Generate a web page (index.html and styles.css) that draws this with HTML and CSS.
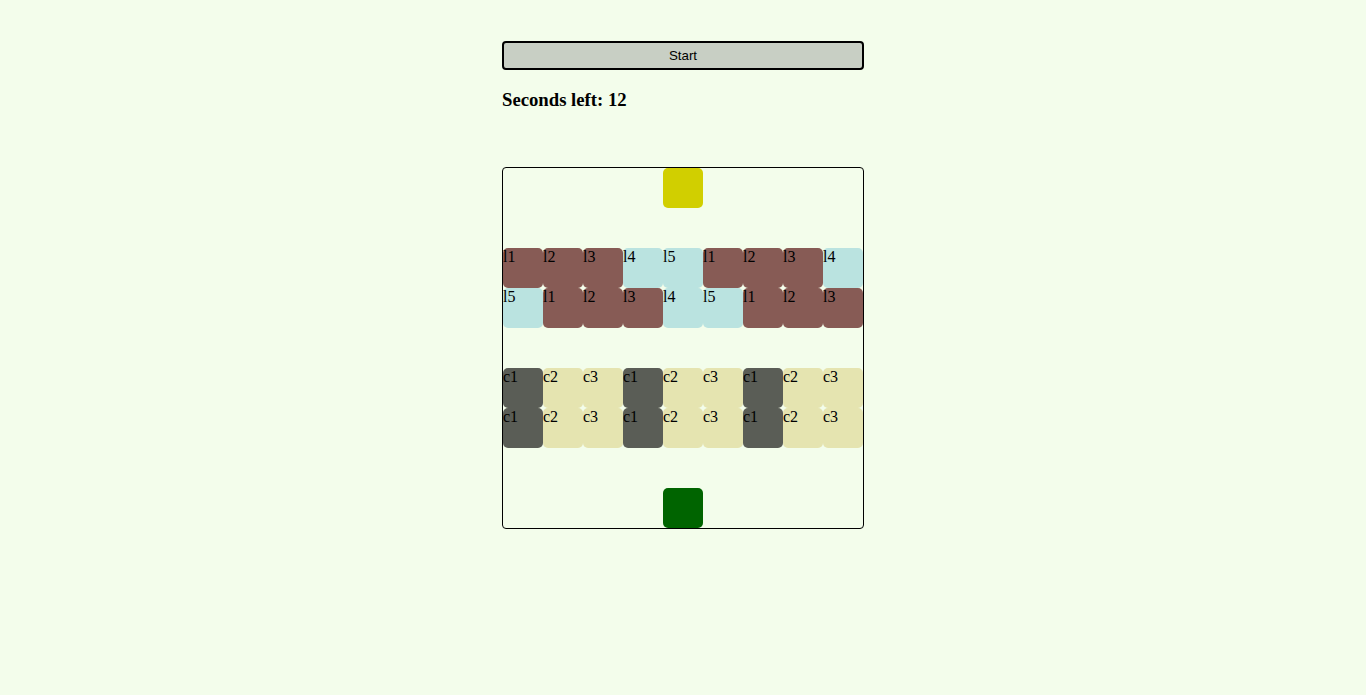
FILE: index.html
```html
<!DOCTYPE html><html lang="en"><head><meta charset="UTF-8"><meta name="viewport" content="width=device-width, initial-scale=1.0"><title>Frogger</title><link rel="stylesheet" href="styles.css"></head><body>
<div class="game">
  <button class="start">Start</button>
  <h3 class="timer">Seconds left: <span id="time">12</span></h3>
  <div class="grid">
    <div></div><div></div><div></div><div></div><div class="ending"></div><div></div><div></div><div></div><div></div>
    <div></div><div></div><div></div><div></div><div></div><div></div><div></div><div></div><div></div>
    <div class="log-left l1">l1</div><div class="log-left l2">l2</div><div class="log-left l3">l3</div><div class="log-left l4">l4</div><div class="log-left l5">l5</div><div class="log-left l1">l1</div><div class="log-left l2">l2</div><div class="log-left l3">l3</div><div class="log-left l4">l4</div>
    <div class="log-right l5">l5</div><div class="log-right l1">l1</div><div class="log-right l2">l2</div><div class="log-right l3">l3</div><div class="log-right l4">l4</div><div class="log-right l5">l5</div><div class="log-right l1">l1</div><div class="log-right l2">l2</div><div class="log-right l3">l3</div>
    <div></div><div></div><div></div><div></div><div></div><div></div><div></div><div></div><div></div>
    <div class="car-left c1">c1</div><div class="car-left c2">c2</div><div class="car-left c3">c3</div><div class="car-left c1">c1</div><div class="car-left c2">c2</div><div class="car-left c3">c3</div><div class="car-left c1">c1</div><div class="car-left c2">c2</div><div class="car-left c3">c3</div>
    <div class="car-right c1">c1</div><div class="car-right c2">c2</div><div class="car-right c3">c3</div><div class="car-right c1">c1</div><div class="car-right c2">c2</div><div class="car-right c3">c3</div><div class="car-right c1">c1</div><div class="car-right c2">c2</div><div class="car-right c3">c3</div>
    <div></div><div></div><div></div><div></div><div></div><div></div><div></div><div></div><div></div>
    <div></div><div></div><div></div><div></div><div class="starting"></div><div></div><div></div><div></div><div></div>
  </div>
</div>
</body></html>
```
FILE: styles.css
```css
body{margin:0;background:#f3fdeb;font-family:"Liberation Serif",serif;}
.game{width:362px;margin:0 auto;padding-top:41px;}
.start{display:block;width:100%;height:29px;background:#c8cfc4;border:2px solid #000;border-radius:4px;font-family:"Liberation Sans",Arial,sans-serif;font-size:13.33px;color:#000;cursor:pointer;}
.timer{font-size:18.72px;margin:19px 0;}
.grid{display:grid;grid-template-columns:repeat(9,40px);grid-auto-rows:40px;border:1px solid #000;border-radius:4px;margin-top:56px;}
.grid div{border-radius:5px;font-size:16px;line-height:18px;}
.ending{background:#d1cf00;}
.starting{background:#006400;}
.l1,.l2,.l3{background:#875b55;}
.l4,.l5{background:#bae3e0;}
.c1{background:#5a5d56;}
.c2,.c3{background:#e5e4b0;}
```
